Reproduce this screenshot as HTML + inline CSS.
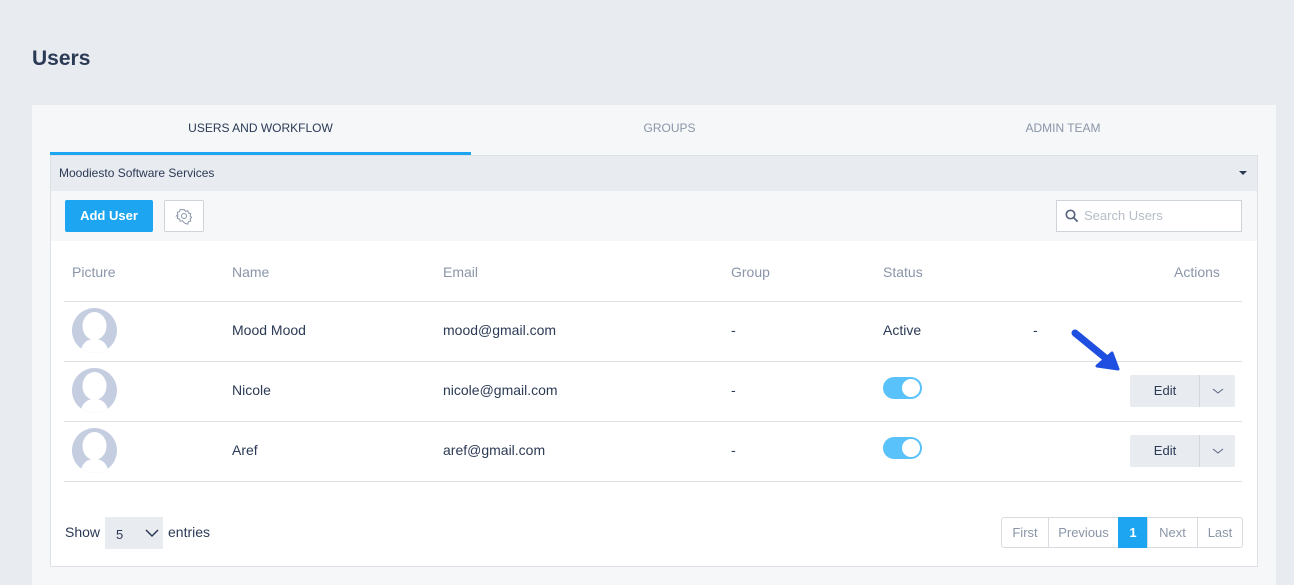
<!DOCTYPE html>
<html><head><meta charset="utf-8"><style>
*{box-sizing:border-box;margin:0;padding:0}
body{width:1294px;height:575px;background:#e8ebef;font-family:"Liberation Sans",sans-serif;color:#2b3a55;position:relative;overflow:hidden}
.abs{position:absolute}
h1{position:absolute;left:32px;top:47px;font-size:21px;font-weight:bold;color:#2b3a55}
.card{left:32px;top:105px;width:1244px;height:480px;background:#f5f7f9}
.tab{top:121px;font-size:12px;color:#8a96a8;text-align:center}
.panel{left:50px;top:155px;width:1208px;height:412px;border:1px solid #dde1e6;background:#fff}
.th{top:264px;font-size:14px;color:#8a96a8}
.td{font-size:14px;color:#2b3a55}
.line{left:64px;width:1178px;height:1px;background:#dcdfe3}
.av{left:72px;width:45px;height:45px;border-radius:50%;background:#c5cde0;overflow:hidden}
.tog{left:883px;width:39px;height:22px;border-radius:11px;background:#5ac2fa}
.tog:after{content:"";position:absolute;right:2px;top:2px;width:18px;height:18px;border-radius:50%;background:#fff}
.edit{left:1130px;width:105px;height:32px;background:#e8ebef;border-radius:2px;font-size:13px}
.pg{top:517px;height:31px;border:1px solid #d8dce1;font-size:13px;color:#8a96a8;line-height:29px;text-align:center;background:#fff}
</style></head><body>
<h1>Users</h1>
<div class="abs card"></div>
<div class="abs tab" style="left:50px;width:421px;color:#2b3a55">USERS AND WORKFLOW</div>
<div class="abs tab" style="left:471px;width:397px">GROUPS</div>
<div class="abs tab" style="left:868px;width:390px">ADMIN TEAM</div>
<div class="abs" style="left:50px;top:152px;width:421px;height:4px;background:#1da5f1"></div>
<div class="abs panel"></div>
<div class="abs" style="left:51px;top:156px;width:1206px;height:35px;background:#e8ebef"></div>
<div class="abs" style="left:59px;top:166px;font-size:12px">Moodiesto Software Services</div>
<div class="abs" style="left:1239px;top:171px;border-left:4px solid transparent;border-right:4px solid transparent;border-top:4px solid #2b3a55"></div>
<div class="abs" style="left:51px;top:191px;width:1206px;height:50px;background:#f5f7f9"></div>
<div class="abs" style="left:65px;top:200px;width:88px;height:32px;background:#1da5f1;color:#fff;font-weight:bold;font-size:13px;line-height:32px;text-align:center;border-radius:2px">Add User</div>
<div class="abs" style="left:164px;top:200px;width:40px;height:32px;border:1px solid #cfd4da;background:#fff;border-radius:2px">
<svg width="40" height="32" viewBox="0 0 40 32" style="position:absolute;left:-1px;top:-1px"><circle cx="20" cy="16" r="2.5" fill="none" stroke="#8a96a8" stroke-width="1"/><path d="M20 9.5l1.5 1.8 2.3-.6.6 2.3 2.3.6-.6 2.3 1.5 1.5-1.5 1.5.6 2.3-2.3.6-.6 2.3-2.3-.6L20 22.5l-1.5-1.8-2.3.6-.6-2.3-2.3-.6.6-2.3L12.4 16l1.5-1.5-.6-2.3 2.3-.6.6-2.3 2.3.6z" fill="none" stroke="#8a96a8" stroke-width="1"/></svg></div>
<div class="abs" style="left:1056px;top:200px;width:186px;height:32px;border:1px solid #cfd4da;background:#fff;font-size:13px;color:#b5bdc8;line-height:30px;padding-left:27px">Search Users
<svg width="14" height="14" style="position:absolute;left:8px;top:8px"><circle cx="5.5" cy="5.5" r="4.2" fill="none" stroke="#5a6680" stroke-width="1.7"/><path d="M8.6 8.6l4 4" stroke="#5a6680" stroke-width="1.8"/></svg></div>
<div class="abs th" style="left:72px">Picture</div>
<div class="abs th" style="left:232px">Name</div>
<div class="abs th" style="left:443px">Email</div>
<div class="abs th" style="left:731px">Group</div>
<div class="abs th" style="left:883px">Status</div>
<div class="abs th" style="left:1174px">Actions</div>
<div class="abs line" style="top:301px"></div>
<div class="abs line" style="top:361px"></div>
<div class="abs line" style="top:421px"></div>
<div class="abs line" style="top:481px"></div>
<div class="abs av" style="top:308px"><svg width="45" height="45"><ellipse cx="22.5" cy="18" rx="12" ry="14" fill="#fff"/><path d="M8 45c2-10 7-14 14.5-14S35 35 37 45z" fill="#fff"/></svg></div>
<div class="abs av" style="top:368px"><svg width="45" height="45"><ellipse cx="22.5" cy="18" rx="12" ry="14" fill="#fff"/><path d="M8 45c2-10 7-14 14.5-14S35 35 37 45z" fill="#fff"/></svg></div>
<div class="abs av" style="top:428px"><svg width="45" height="45"><ellipse cx="22.5" cy="18" rx="12" ry="14" fill="#fff"/><path d="M8 45c2-10 7-14 14.5-14S35 35 37 45z" fill="#fff"/></svg></div>
<div class="abs td" style="left:232px;top:322px">Mood Mood</div>
<div class="abs td" style="left:443px;top:322px">mood@gmail.com</div>
<div class="abs td" style="left:731px;top:322px">-</div>
<div class="abs td" style="left:883px;top:322px">Active</div>
<div class="abs td" style="left:1033px;top:322px">-</div>
<div class="abs td" style="left:232px;top:382px">Nicole</div>
<div class="abs td" style="left:443px;top:382px">nicole@gmail.com</div>
<div class="abs td" style="left:731px;top:382px">-</div>
<div class="abs tog" style="top:377px"></div>
<div class="abs td" style="left:232px;top:442px">Aref</div>
<div class="abs td" style="left:443px;top:442px">aref@gmail.com</div>
<div class="abs td" style="left:731px;top:442px">-</div>
<div class="abs tog" style="top:437px"></div>
<div class="abs edit" style="top:375px"><span style="position:absolute;left:0;width:70px;text-align:center;line-height:32px">Edit</span><span style="position:absolute;left:69px;top:0;width:1px;height:32px;background:#d3d8de"></span><svg width="12" height="8" style="position:absolute;left:82px;top:12px"><path d="M1 2l5 4 5-4" fill="none" stroke="#5a6680"/></svg></div>
<div class="abs edit" style="top:435px"><span style="position:absolute;left:0;width:70px;text-align:center;line-height:32px">Edit</span><span style="position:absolute;left:69px;top:0;width:1px;height:32px;background:#d3d8de"></span><svg width="12" height="8" style="position:absolute;left:82px;top:12px"><path d="M1 2l5 4 5-4" fill="none" stroke="#5a6680"/></svg></div>
<svg class="abs" style="left:1066px;top:326px" width="60" height="50"><path d="M9 7L42 34" stroke="#1f4fe0" stroke-width="7" stroke-linecap="round"/><path d="M52 43L31 40L46 27z" fill="#1f4fe0" stroke="#1f4fe0" stroke-width="3" stroke-linejoin="round"/></svg>
<div class="abs td" style="left:65px;top:524px">Show</div>
<div class="abs" style="left:105px;top:517px;width:58px;height:32px;background:#e8ebef;font-size:13px;padding:10px 0 0 11px">5<svg width="14" height="9" style="position:absolute;left:40px;top:12px"><path d="M1 1l6 6 6-6" fill="none" stroke="#2b3a55" stroke-width="1.5"/></svg></div>
<div class="abs td" style="left:168px;top:524px">entries</div>
<div class="abs pg" style="left:1001px;width:48px;border-radius:3px 0 0 3px">First</div>
<div class="abs pg" style="left:1048px;width:71px">Previous</div>
<div class="abs pg" style="left:1118px;width:30px;background:#1da5f1;color:#fff;font-weight:bold;border-color:#1da5f1">1</div>
<div class="abs pg" style="left:1147px;width:51px">Next</div>
<div class="abs pg" style="left:1197px;width:46px;border-radius:0 3px 3px 0">Last</div>
</body></html>
